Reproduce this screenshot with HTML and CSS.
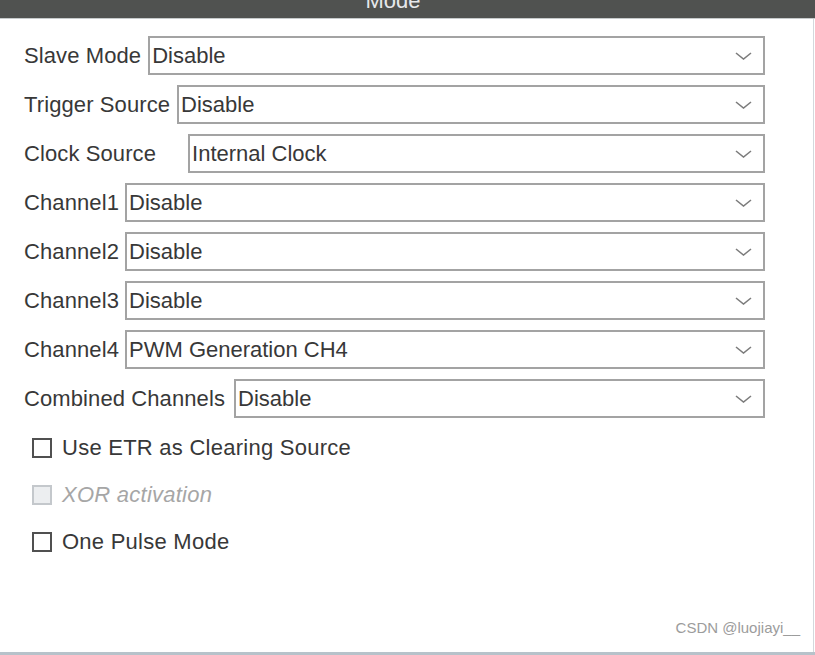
FILE: index.html
```html
<!DOCTYPE html>
<html>
<head>
<meta charset="utf-8">
<link rel="stylesheet" href="styles.css">
</head>
<body>
<div class="panel">
  <div class="header"><span class="header-title">Mode</span></div>
  <div class="content">
    <div class="form">
      <div class="selects">
        <div class="row"><span class="label">Slave Mode</span><div class="select gap-8"><span class="value">Disable</span><svg class="chev" width="17" height="8" viewBox="0 0 17 8"><polyline points="1,1 8.5,7 16,1" /></svg></div></div>
        <div class="row"><span class="label">Trigger Source</span><div class="select gap-8"><span class="value">Disable</span><svg class="chev" width="17" height="8" viewBox="0 0 17 8"><polyline points="1,1 8.5,7 16,1" /></svg></div></div>
        <div class="row"><span class="label">Clock Source</span><div class="select gap-clock"><span class="value">Internal Clock</span><svg class="chev" width="17" height="8" viewBox="0 0 17 8"><polyline points="1,1 8.5,7 16,1" /></svg></div></div>
        <div class="row"><span class="label">Channel1</span><div class="select gap-7"><span class="value">Disable</span><svg class="chev" width="17" height="8" viewBox="0 0 17 8"><polyline points="1,1 8.5,7 16,1" /></svg></div></div>
        <div class="row"><span class="label">Channel2</span><div class="select gap-7"><span class="value">Disable</span><svg class="chev" width="17" height="8" viewBox="0 0 17 8"><polyline points="1,1 8.5,7 16,1" /></svg></div></div>
        <div class="row"><span class="label">Channel3</span><div class="select gap-7"><span class="value">Disable</span><svg class="chev" width="17" height="8" viewBox="0 0 17 8"><polyline points="1,1 8.5,7 16,1" /></svg></div></div>
        <div class="row"><span class="label">Channel4</span><div class="select gap-7"><span class="value">PWM Generation CH4</span><svg class="chev" width="17" height="8" viewBox="0 0 17 8"><polyline points="1,1 8.5,7 16,1" /></svg></div></div>
        <div class="row"><span class="label">Combined Channels</span><div class="select gap-11"><span class="value">Disable</span><svg class="chev" width="17" height="8" viewBox="0 0 17 8"><polyline points="1,1 8.5,7 16,1" /></svg></div></div>
      </div>
      <div class="checks">
        <div class="check-row"><span class="box"></span><span class="check-label">Use ETR as Clearing Source</span></div>
        <div class="check-row disabled"><span class="box"></span><span class="check-label">XOR activation</span></div>
        <div class="check-row"><span class="box"></span><span class="check-label">One Pulse Mode</span></div>
      </div>
    </div>
    <div class="watermark">CSDN @luojiayi__</div>
  </div>
  <div class="footer-bar"></div>
</div>
</body>
</html>
```

FILE: styles.css
```css
html, body {
  margin: 0;
  padding: 0;
  background: #ffffff;
  overflow: hidden;
}

.panel {
  width: 815px;
  height: 655px;
  display: flex;
  flex-direction: column;
  font-family: "Liberation Sans", Arial, sans-serif;
  color: #383838;
}

.header {
  height: 18px;
  flex: none;
  background: #505250;
  border-bottom: 1px solid #c6cacb;
  overflow: hidden;
  text-align: center;
  padding-right: 29px;
}

.header-title {
  display: block;
  margin-top: -10px;
  font-size: 22px;
  line-height: 22px;
  color: #e6e8ea;
}

.content {
  flex: 1;
  width: 813px;
  border-right: 1px solid #d4d8dc;
  display: flex;
  flex-direction: column;
}

.form {
  padding: 17px 48px 0 24px;
}

.selects {
  display: flex;
  flex-direction: column;
  gap: 10px;
}

.row {
  display: flex;
  align-items: center;
  height: 39px;
}

.label {
  flex: none;
  font-size: 22px;
  white-space: nowrap;
  letter-spacing: 0.1px;
}

.select {
  flex: 1;
  height: 39px;
  box-sizing: border-box;
  border: 2px solid #a3a3a3;
  display: flex;
  align-items: center;
  justify-content: space-between;
  padding: 0 11px 0 2px;
}

.gap-8 { margin-left: 7px; }
.gap-7 { margin-left: 6px; }
.gap-11 { margin-left: 9px; }
.gap-clock { margin-left: 32px; }

.value {
  font-size: 22px;
  white-space: nowrap;
}

.chev polyline {
  fill: none;
  stroke: #7c7c7c;
  stroke-width: 1.6;
}

.checks {
  padding-top: 6px;
  display: flex;
  flex-direction: column;
}

.check-row {
  height: 47px;
  display: flex;
  align-items: center;
}

.box {
  width: 20px;
  height: 20px;
  box-sizing: border-box;
  border: 2px solid #505050;
  margin-left: 8px;
  margin-right: 10px;
  flex: none;
}

.check-label {
  font-size: 22px;
  letter-spacing: 0.25px;
}

.check-row.disabled .box {
  border-color: #c4c8cc;
  background: #eceef0;
}

.check-row.disabled .check-label {
  font-style: italic;
  color: #a6a6a6;
}

.watermark {
  margin-top: auto;
  align-self: flex-end;
  margin-right: 13px;
  margin-bottom: 16px;
  font-size: 15px;
  line-height: 17px;
  color: #9c9c9c;
}

.footer-bar {
  height: 3px;
  flex: none;
  background: #b7c2ca;
}
```
